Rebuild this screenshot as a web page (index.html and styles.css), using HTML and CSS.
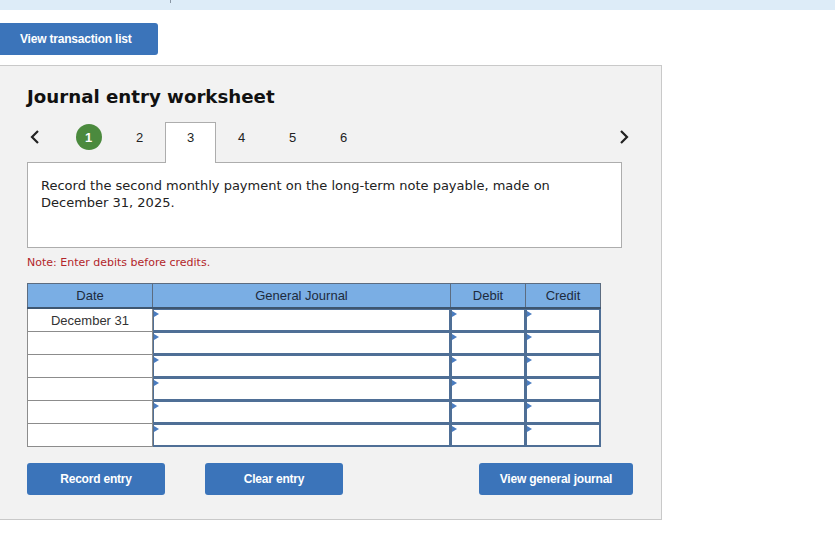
FILE: index.html
```html
<!DOCTYPE html>
<html>
<head>
<meta charset="utf-8">
<link rel="stylesheet" href="styles.css">
</head>
<body>
<div class="topbar"><span class="topmark"></span></div>
<div class="toolbar">
  <button class="btn btn-list">View transaction list</button>
</div>
<div class="panel">
  <h1 class="title">Journal entry worksheet</h1>
  <div class="nav">
    <span class="arrow arrow-left"><svg width="12" height="16" viewBox="0 0 12 16"><path d="M9 2 L3 8 L9 14" fill="none" stroke="#222" stroke-width="2.2"/></svg></span>
    <div class="tabs">
      <span class="tab"><span class="done">1</span></span>
      <span class="tab">2</span>
      <span class="tab tab-active">3</span>
      <span class="tab">4</span>
      <span class="tab">5</span>
      <span class="tab">6</span>
    </div>
    <span class="arrow arrow-right"><svg width="12" height="16" viewBox="0 0 12 16"><path d="M3 2 L9 8 L3 14" fill="none" stroke="#222" stroke-width="2.2"/></svg></span>
  </div>
  <div class="prompt">Record the second monthly payment on the long-term note payable, made on December 31, 2025.</div>
  <div class="note">Note: Enter debits before credits.</div>
  <table class="journal">
    <thead>
      <tr><th class="c-date">Date</th><th class="c-acct">General Journal</th><th class="c-amt">Debit</th><th class="c-amt">Credit</th></tr>
    </thead>
    <tbody>
      <tr><td class="date">December 31</td><td class="in"><div class="box"></div></td><td class="in"><div class="box"></div></td><td class="in"><div class="box"></div></td></tr>
      <tr><td class="date"></td><td class="in"><div class="box"></div></td><td class="in"><div class="box"></div></td><td class="in"><div class="box"></div></td></tr>
      <tr><td class="date"></td><td class="in"><div class="box"></div></td><td class="in"><div class="box"></div></td><td class="in"><div class="box"></div></td></tr>
      <tr><td class="date"></td><td class="in"><div class="box"></div></td><td class="in"><div class="box"></div></td><td class="in"><div class="box"></div></td></tr>
      <tr><td class="date"></td><td class="in"><div class="box"></div></td><td class="in"><div class="box"></div></td><td class="in"><div class="box"></div></td></tr>
      <tr><td class="date"></td><td class="in"><div class="box"></div></td><td class="in"><div class="box"></div></td><td class="in"><div class="box"></div></td></tr>
    </tbody>
  </table>
  <div class="actions">
    <button class="btn btn-act">Record entry</button>
    <button class="btn btn-act btn-clear">Clear entry</button>
    <button class="btn btn-act btn-view">View general journal</button>
  </div>
</div>
</body>
</html>
```
FILE: styles.css
```css
html, body {
  margin: 0;
  padding: 0;
  background: #ffffff;
}
body {
  font-family: "DejaVu Sans", Verdana, sans-serif;
  color: #222;
}
.topbar {
  height: 10px;
  background: #ddecf8;
  position: relative;
}
.topmark {
  position: absolute;
  left: 170px;
  top: 0;
  width: 1px;
  height: 3px;
  background: #8a96a4;
}
.toolbar {
  padding: 13px 0 0 0;
  height: 42px;
}
.btn {
  font-family: "Liberation Sans", Arial, sans-serif;
  font-weight: bold;
  font-size: 12px;
  color: #fff;
  background: #3b74ba;
  border: none;
  border-radius: 3px;
  cursor: pointer;
  letter-spacing: -0.2px;
}
.btn-list {
  width: 158px;
  height: 32px;
  border-radius: 0 3px 3px 0;
  text-align: left;
  padding-left: 20px;
}
.panel {
  width: 663px;
  height: 455px;
  box-sizing: border-box;
  margin-left: -1px;
  background: #f2f2f2;
  border: 1px solid #c9c9c9;
  padding: 0 0 0 27px;
}
.title {
  margin: 20px 0 0 0;
  font-size: 18.2px;
  font-weight: bold;
  color: #111;
  line-height: 22px;
  height: 22px;
}
.nav {
  display: flex;
  align-items: flex-start;
  margin-top: 14px;
  width: 595px;
  height: 40px;
  position: relative;
}
.arrow {
  display: flex;
  align-items: center;
  justify-content: center;
  height: 30px;
}
.arrow-left {
  width: 16px;
  margin-right: 20px;
}
.arrow-right {
  margin-left: auto;
  width: 16px;
  margin-right: -10px;
}
.tabs {
  display: flex;
  align-items: flex-start;
}
.tab {
  width: 51px;
  height: 40px;
  display: flex;
  align-items: flex-start;
  justify-content: center;
  padding-top: 8px;
  font-family: "Liberation Sans", Arial, sans-serif;
  font-size: 13px;
  line-height: 15px;
  color: #222;
  box-sizing: border-box;
}
.tab:first-child {
  padding-top: 2px;
}
.tab-active {
  background: #fff;
  border: 1px solid #adadad;
  border-bottom: none;
  height: 41px;
  margin-bottom: -1px;
  padding-top: 7px;
  position: relative;
  z-index: 2;
}
.done {
  width: 26px;
  height: 26px;
  border-radius: 50%;
  background: #4b8a3e;
  color: #fff;
  font-weight: bold;
  font-size: 13px;
  display: flex;
  align-items: center;
  justify-content: center;
}
.prompt {
  width: 595px;
  height: 86px;
  box-sizing: border-box;
  background: #fff;
  border: 1px solid #adadad;
  padding: 14px 13px;
  font-size: 13px;
  line-height: 17px;
  color: #222;
}
.note {
  margin-top: 8px;
  font-size: 11px;
  color: #b3262a;
  line-height: 14px;
}
.journal {
  margin-top: 13px;
  border-collapse: collapse;
  font-family: "Liberation Sans", Arial, sans-serif;
  font-size: 13px;
}
.journal th {
  background: #7aaee4;
  color: #1d2b3d;
  font-weight: normal;
  height: 23px;
  padding: 0;
  border: 1px solid #5c6c80;
  border-bottom: 2px solid #3e5670;
}
.c-date { width: 124px; }
.c-acct { width: 297px; }
.c-amt { width: 74px; }
.journal td {
  padding: 0;
  height: 22px;
}
.date {
  background: #fff;
  border: 1px solid #8c8c8c;
  text-align: center;
  color: #333;
}
.in {
  border: 1px solid #4f6f96;
  background: #fff;
}
.box {
  height: 20px;
  border: 1px solid #4f6f96;
  position: relative;
}
.box::before {
  content: "";
  position: absolute;
  left: 0;
  top: 1px;
  border-left: 5px solid #4a7cc0;
  border-top: 3.5px solid transparent;
  border-bottom: 3.5px solid transparent;
}
.actions {
  display: flex;
  margin-top: 16px;
  width: 606px;
}
.btn-act {
  width: 138px;
  height: 32px;
}
.btn-clear {
  width: 138px;
  margin-left: 40px;
}
.btn-view {
  width: 154px;
  margin-left: auto;
}
```
